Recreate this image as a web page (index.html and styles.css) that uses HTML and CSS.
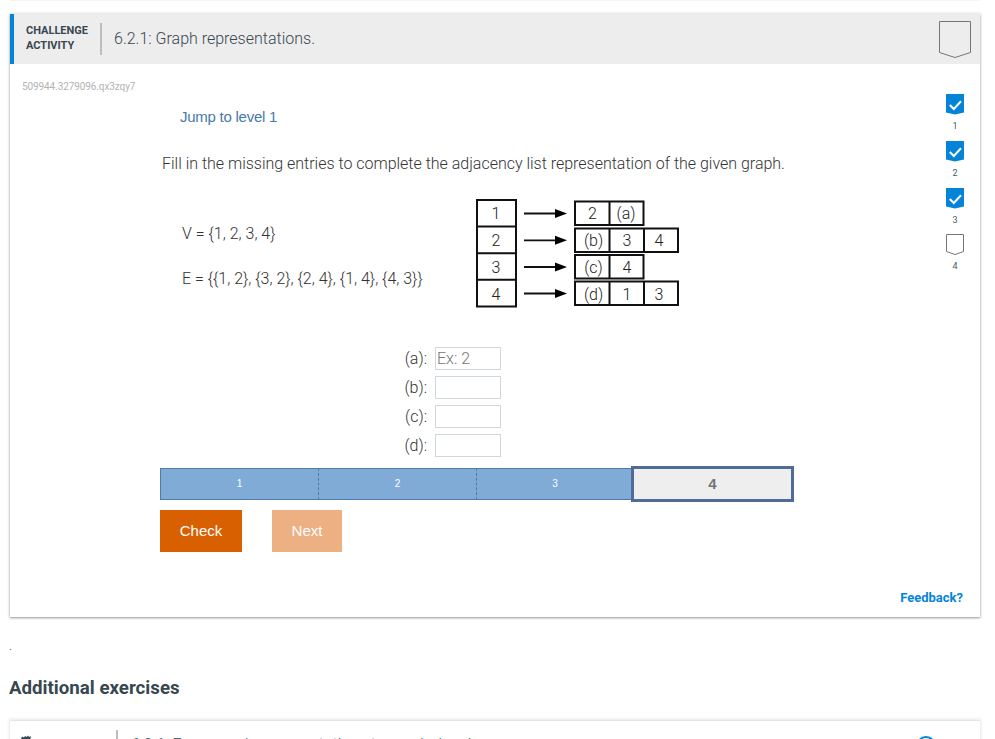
FILE: index.html
```html
<!DOCTYPE html>
<html lang="en">
<head>
<meta charset="utf-8">
<title>6.2.1: Graph representations</title>
<link rel="stylesheet" href="styles.css">
</head>
<body>
<div class="previous-card"></div>
<section class="card">
  <header class="card-header">
    <div class="kind">CHALLENGE<br>ACTIVITY</div>
    <h1 class="title">6.2.1: Graph representations.</h1>
    <svg class="ribbon" width="34" height="40" viewBox="0 0 34 40"><path d="M1.500 2.500h31v31l-15.500 5-15.500-5z" fill="none" stroke="#757575"/></svg>
  </header>
  <div class="card-body">
    <main class="activity">
      <div class="seed">509944.3279096.qx3zqy7</div>
      <a class="jump">Jump to level 1</a>
      <p class="prompt">Fill in the missing entries to complete the adjacency list representation of the given graph.</p>
      <div class="question">
        <div class="sets">
          <p>V = {1, 2, 3, 4}</p>
          <p>E = {{1, 2}, {3, 2}, {2, 4}, {1, 4}, {4, 3}}</p>
        </div>
        <svg class="diagram" width="210" height="114" viewBox="0 0 210 114">
          <g fill="none" stroke="#111" stroke-width="2">
            <path d="M7 4h39v106.500H7zM7 30.500h39M7 57.200h39M7 83.700h39"/>
            <path d="M105 5.500h68.500V29H105zM139.500 5.500V29"/>
            <path d="M105 32.500h103V56H105zM139.500 32.500V56M174 32.500V56"/>
            <path d="M105 59h68.500v23.500H105zM139.500 59v23.500"/>
            <path d="M105 85.500h103V109H105zM139.500 85.500V109M174 85.500V109"/>
            <path d="M54 17.500h32M54 44.300h32M54 71h32M54 97.500h32" stroke-width="1.800"/>
          </g>
          <path d="M85 13l12 4.500-12 4.500zM85 39.800l12 4.500-12 4.500zM85 66.500l12 4.500-12 4.500zM85 93l12 4.500-12 4.500z" fill="#000"/>
          <g class="cells">
            <text x="26" y="23">1</text><text x="26" y="50">2</text><text x="26" y="77">3</text><text x="26" y="104">4</text>
            <text x="122.500" y="23">2</text><text x="156" y="23">(a)</text>
            <text x="123.500" y="50">(b)</text><text x="157" y="50">3</text><text x="189" y="50">4</text>
            <text x="123.500" y="77">(c)</text><text x="157" y="77">4</text>
            <text x="123.500" y="104">(d)</text><text x="157" y="104">1</text><text x="189" y="104">3</text>
          </g>
        </svg>
      </div>
      <div class="answers">
        <label>(a): <input type="text" placeholder="Ex: 2"></label>
        <label>(b): <input type="text"></label>
        <label>(c): <input type="text"></label>
        <label>(d): <input type="text"></label>
      </div>
      <div class="levels">
        <div class="level">1</div><div class="level">2</div><div class="level">3</div><div class="level current">4</div>
      </div>
      <div class="buttons">
        <button class="check">Check</button>
        <button class="next">Next</button>
      </div>
    </main>
    <aside class="progress">
      <div class="step"><svg width="20" height="21" viewBox="0 0 20 21"><path d="M1 0h18v18.500l-9 2-9-2z" fill="#0484d9"/><path d="M4.800 11l4 4 7.200-7.700" fill="none" stroke="#fff" stroke-width="2"/></svg><span>1</span></div>
      <div class="step"><svg width="20" height="21" viewBox="0 0 20 21"><path d="M1 0h18v18.500l-9 2-9-2z" fill="#0484d9"/><path d="M4.800 11l4 4 7.200-7.700" fill="none" stroke="#fff" stroke-width="2"/></svg><span>2</span></div>
      <div class="step"><svg width="20" height="21" viewBox="0 0 20 21"><path d="M1 0h18v18.500l-9 2-9-2z" fill="#0484d9"/><path d="M4.800 11l4 4 7.200-7.700" fill="none" stroke="#fff" stroke-width="2"/></svg><span>3</span></div>
      <div class="step open"><svg width="20" height="21" viewBox="0 0 20 21"><path d="M1.500 .5h17v17l-8.500 3-8.500-3z" fill="none" stroke="#757575"/></svg><span>4</span></div>
    </aside>
  </div>
  <footer class="card-footer">Feedback?</footer>
</section>
<p class="dot">.</p>
<h2 class="heading">Additional exercises</h2>
<section class="exercise">
  <svg class="exercise-icon" width="12" height="20" viewBox="0 0 12 20"><path d="M1 1.500l2 1 1-1.500 1.500 1L7 .5l1 1.500 2-1-.5 2 .5 10H2V4H0z" fill="#37474f"/></svg>
  <div class="exercise-title">6.2.1: From graph representations to graph drawings.</div>
  <svg class="info" width="20" height="20" viewBox="0 0 20 20"><circle cx="10" cy="10" r="9" fill="none" stroke="#0484d9" stroke-width="2"/></svg>
</section>
</body>
</html>
```
FILE: styles.css
```css
* { box-sizing: border-box; }
html { height: 100%; overflow: hidden; }
body {
  height: 100%;
  margin: 0;
  padding: 0 15px 0 10px;
  overflow: hidden;
  background: #fff;
  color: #37474f;
  font: 300 16px/20px Roboto, sans-serif;
}
h1, h2, p { margin: 0; font-size: 16px; font-weight: 300; }
.previous-card { height: 1px; margin-bottom: 13px; background: #f5f5f5; }
.card {
  height: 603px;
  display: flex;
  flex-direction: column;
  background: #fff;
  box-shadow: 0 1px 2px rgba(0,0,0,.35), 0 0 3px 1px rgba(0,0,0,.1);
}
.card-header {
  display: flex;
  align-items: center;
  height: 50px;
  flex: none;
  padding-right: 8px;
  border-left: 4px solid #0484d9;
  background: #ededed;
}
.kind {
  width: 88px;
  height: 32px;
  padding: 0 0 0 12px;
  border-right: 2px solid #bdbdbd;
  font: 700 11px/15px Roboto, sans-serif;
}
.title { flex: 1; padding-left: 12px; }
.card-body { display: flex; flex: 1; }
.activity { width: 784px; padding: 13px 0 0 150px; color: #333; }
.seed { margin-left: -138px; font-size: 10px; color: #b3b3b3; font-weight: 400; letter-spacing: -.1px; }
.jump {
  display: block;
  margin: 10px 0 0 20px;
  color: #4679ac;
  font: 15px/20px "Liberation Sans", sans-serif;
  letter-spacing: -.25px;
}
.prompt { margin: 27px 0 0 2px; white-space: nowrap; letter-spacing: -.01px; }
.question { display: flex; margin-top: 22px; }
.sets { width: 310px; padding: 28px 0 0 22px; }
.sets p { margin-bottom: 25px; }
.cells text { font: 300 16px Roboto, sans-serif; fill: #222; text-anchor: middle; }
.answers { display: grid; gap: 6px; width: 341px; margin-top: 33px; }
.answers label { display: flex; justify-content: flex-end; align-items: center; gap: 8px; height: 23px; }
.answers input {
  width: 66px;
  height: 23px;
  padding: 1px;
  border: 1px solid #cfd8dc;
  border-radius: 0;
  font: 300 16px Roboto, sans-serif;
}
.answers input::placeholder { color: #757575; }
.levels { display: flex; align-items: center; height: 36px; margin-top: 9px; }
.level {
  width: 158px;
  height: 32px;
  border: 1px solid #4b7cae;
  border-width: 1px 0;
  border-right: 1px dashed #4b7cae;
  background: #80abd6;
  color: #fff;
  font: 10px/30px "Liberation Sans", sans-serif;
  text-align: center;
}
.level:first-child { width: 159px; border-left: 1px solid #4b7cae; }
.level:nth-child(3) { width: 154px; padding-left: 2px; border-right: 0; }
.level.current {
  width: 163px;
  height: 36px;
  border: 3px solid #4f6b98;
  background: #eee;
  color: #757575;
  font: 700 15px/30px "Liberation Sans", sans-serif;
}
.buttons { display: flex; gap: 30px; margin-top: 8px; }
.buttons button {
  height: 42px;
  padding: 0 0 2px;
  border: 0;
  color: #fff;
  font: 15px "Liberation Sans", sans-serif;
}
.check { width: 82px; background: #d96000; }
.next { width: 70px; background: #ecb083; }
.progress { width: 186px; padding: 30px 15px 0 0; }
.step { display: flex; flex-direction: column; align-items: center; width: 20px; height: 47px; margin-left: auto; font-size: 9px; color: #455a64; font-weight: 400; }
.step span { line-height: 12px; margin-top: 5px; }
.step.open { margin-top: -1px; }
.card-footer { height: 29px; padding-right: 17px; color: #0484d9; font: 700 13px/20px Roboto, sans-serif; text-align: right; }
.dot { margin-top: 19px; font-size: 13px; line-height: 20px; margin-left: -1px; }
.heading { margin: 21px 0 0 -1px; font: 700 18.700px/22px Roboto, sans-serif; }
.exercise {
  display: flex;
  height: 80px;
  margin-top: 22px;
  padding: 9px 44px 0 11px;
  border-top: 1px solid #e5e5e5;
  box-shadow: 0 0 3px 1px rgba(0,0,0,.1);
}
.heading + .exercise { margin-top: 21px; }
.exercise-icon { margin-top: 5px; }
.exercise-title { height: 32px; margin-left: 83px; padding: 5px 0 0 13px; border-left: 2px solid #bdbdbd; }
.info { margin: 6px 0 0 auto; }
```
